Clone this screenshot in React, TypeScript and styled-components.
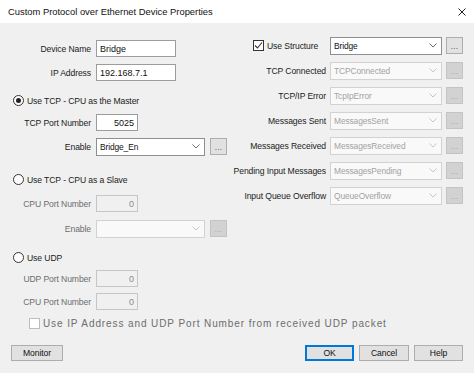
import React from 'react';
import styled, { createGlobalStyle } from 'styled-components';

const GlobalStyle = createGlobalStyle`
  html, body {
    margin: 0;
    padding: 0;
  }
  body {
    font-family: 'Liberation Sans', Arial, sans-serif;
    font-size: 8.6px;
    letter-spacing: -0.1px;
    color: #1b1b1b;
  }
`;

const Window = styled.div`
  width: 474px;
  height: 373px;
  display: flex;
  flex-direction: column;
  background: #f0f0f0;
  overflow: hidden;
`;

const TitleBar = styled.div`
  height: 23px;
  flex-shrink: 0;
  background: #ffffff;
  display: flex;
  align-items: center;
  justify-content: space-between;
  padding: 0 8px 0 8px;
`;

const Title = styled.span`
  font-size: 9.4px;
  letter-spacing: 0;
  color: #111;
`;

const Body = styled.div`
  flex: 1;
  display: flex;
  flex-direction: column;
  padding: 0 11px 12px 11px;
`;

const Columns = styled.div`
  flex: 1;
  display: grid;
  grid-template-columns: 217px 231px;
  column-gap: 4px;
`;

const LeftCol = styled.div`
  display: flex;
  flex-direction: column;
  padding-top: 17px;
`;

const RightCol = styled.div`
  display: flex;
  flex-direction: column;
  gap: 8px;
  padding-top: 14px;
`;

const Row = styled.div<{ $top?: number; $gap?: number }>`
  display: flex;
  align-items: center;
  height: 17px;
  margin-top: ${(p) => p.$top ?? 0}px;
  gap: ${(p) => p.$gap ?? 5}px;
`;

const Label = styled.span<{ $w: number; $disabled?: boolean }>`
  width: ${(p) => p.$w}px;
  flex-shrink: 0;
  text-align: right;
  white-space: nowrap;
  color: ${(p) => (p.$disabled ? '#6d6d6d' : '#1b1b1b')};
`;

const TextBox = styled.div<{ $w: number; $disabled?: boolean; $right?: boolean }>`
  width: ${(p) => p.$w}px;
  height: 17px;
  box-sizing: border-box;
  border: 1px solid ${(p) => (p.$disabled ? '#c6c6c6' : '#9c9c9c')};
  background: ${(p) => (p.$disabled ? '#f0f0f0' : '#ffffff')};
  color: ${(p) => (p.$disabled ? '#8a8a8a' : '#111')};
  display: flex;
  align-items: center;
  justify-content: ${(p) => (p.$right ? 'flex-end' : 'flex-start')};
  padding: 0 3px;
  white-space: nowrap;
  font-size: 9px;
  letter-spacing: 0;
`;

const Combo = styled.div<{ $w: number; $disabled?: boolean }>`
  width: ${(p) => p.$w}px;
  height: 18px;
  box-sizing: border-box;
  border: 1px solid ${(p) => (p.$disabled ? '#d2d2d2' : '#8f8f8f')};
  background: ${(p) => (p.$disabled ? '#f9f9f9' : '#ffffff')};
  color: ${(p) => (p.$disabled ? '#a2a2a2' : '#111')};
  display: flex;
  align-items: center;
  justify-content: space-between;
  padding: 0 4px 0 3px;
  white-space: nowrap;
  font-size: 8.4px;

  svg {
    flex-shrink: 0;
  }
`;

const DotsButton = styled.div<{ $disabled?: boolean }>`
  width: 17px;
  height: 17px;
  box-sizing: border-box;
  border: 1px solid ${(p) => (p.$disabled ? '#c4c4c4' : '#adadad')};
  background: ${(p) => (p.$disabled ? '#d2d2d2' : '#e1e1e1')};
  color: ${(p) => (p.$disabled ? '#9a9a9a' : '#333')};
  display: flex;
  align-items: center;
  justify-content: center;
  font-size: 8px;
  letter-spacing: 0.3px;
  line-height: 1;
  padding-top: 2px;
`;

const RadioRow = styled.label<{ $top: number }>`
  display: flex;
  align-items: center;
  gap: 3px;
  height: 17px;
  margin-top: ${(p) => p.$top}px;
  padding-left: 2px;
  white-space: nowrap;
`;

const RadioDot = styled.span<{ $checked?: boolean }>`
  width: 11px;
  height: 11px;
  flex-shrink: 0;
  box-sizing: border-box;
  border: 1px solid #333;
  border-radius: 50%;
  background: #fff;
  display: flex;
  align-items: center;
  justify-content: center;

  &::after {
    content: '';
    width: 5px;
    height: 5px;
    border-radius: 50%;
    background: ${(p) => (p.$checked ? '#222' : 'transparent')};
  }
`;

const CheckRow = styled.label<{ $top?: number; $indent: number; $disabled?: boolean }>`
  display: flex;
  align-items: center;
  gap: 2px;
  height: 17px;
  margin-top: ${(p) => p.$top ?? 0}px;
  padding-left: ${(p) => p.$indent}px;
  color: ${(p) => (p.$disabled ? '#6d6d6d' : '#1b1b1b')};
  white-space: nowrap;
`;

const CheckBox = styled.span<{ $disabled?: boolean }>`
  width: 11px;
  height: 11px;
  flex-shrink: 0;
  box-sizing: border-box;
  border: 1px solid ${(p) => (p.$disabled ? '#bcbcbc' : '#333')};
  background: #fff;
  display: flex;
  align-items: center;
  justify-content: center;
  margin-right: 1px;
`;

const WideText = styled.span`
  font-size: 10px;
  letter-spacing: 0.9px;
`;

const StructLabel = styled.div`
  width: 94px;
  flex-shrink: 0;
  display: flex;
  align-items: center;
  gap: 2px;
  padding-left: 21px;
  box-sizing: border-box;
  white-space: nowrap;
`;

const Footer = styled.div`
  display: flex;
  align-items: center;
  gap: 5px;
`;

const Spacer = styled.div`
  flex: 1;
`;

const DialogButton = styled.div<{ $w: number; $default?: boolean }>`
  width: ${(p) => p.$w}px;
  height: 16px;
  box-sizing: border-box;
  border: 1px solid ${(p) => (p.$default ? '#0078d7' : '#adadad')};
  box-shadow: ${(p) => (p.$default ? 'inset 0 0 0 1px #0078d7' : 'none')};
  background: #e1e1e1;
  color: #111;
  display: flex;
  align-items: center;
  justify-content: center;
`;

const Chevron: React.FC<{ disabled?: boolean }> = ({ disabled }) => (
  <svg width="8" height="5" viewBox="0 0 8 5">
    <path d="M0.5 0.5 L4 4 L7.5 0.5" fill="none" stroke={disabled ? '#c6c6c6' : '#6e6e6e'} strokeWidth="1" />
  </svg>
);

const CheckMark = () => (
  <svg width="9" height="9" viewBox="0 0 9 9">
    <path d="M1 4.5 L3.5 7 L8 1.5" fill="none" stroke="#333" strokeWidth="1.1" />
  </svg>
);

const CloseIcon = () => (
  <svg width="8" height="8" viewBox="0 0 8 8">
    <path d="M0.5 0.5 L7.5 7.5 M7.5 0.5 L0.5 7.5" stroke="#222" strokeWidth="1" />
  </svg>
);

const linkedTags = [
  { label: 'TCP Connected', value: 'TCPConnected' },
  { label: 'TCP/IP Error', value: 'TcpIpError' },
  { label: 'Messages Sent', value: 'MessagesSent' },
  { label: 'Messages Received', value: 'MessagesReceived' },
  { label: 'Pending Input Messages', value: 'MessagesPending' },
  { label: 'Input Queue Overflow', value: 'QueueOverflow' },
];

const App: React.FC = () => {
  return (
    <>
      <GlobalStyle />
      <Window>
        <TitleBar>
          <Title>Custom Protocol over Ethernet Device Properties</Title>
          <CloseIcon />
        </TitleBar>

        <Body>
          <Columns>
            <LeftCol>
              <Row>
                <Label $w={80}>Device Name</Label>
                <TextBox $w={80}>Bridge</TextBox>
              </Row>
              <Row $top={7}>
                <Label $w={80}>IP Address</Label>
                <TextBox $w={80}>192.168.7.1</TextBox>
              </Row>

              <RadioRow $top={11}>
                <RadioDot $checked />
                Use TCP - CPU as the Master
              </RadioRow>
              <Row $top={5}>
                <Label $w={80}>TCP Port Number</Label>
                <TextBox $w={42} $right>5025</TextBox>
              </Row>
              <Row $top={7}>
                <Label $w={80}>Enable</Label>
                <Combo $w={109}>
                  Bridge_En
                  <Chevron />
                </Combo>
                <DotsButton>...</DotsButton>
              </Row>

              <RadioRow $top={16}>
                <RadioDot />
                Use TCP - CPU as a Slave
              </RadioRow>
              <Row $top={7}>
                <Label $w={80} $disabled>CPU Port Number</Label>
                <TextBox $w={42} $disabled $right>0</TextBox>
              </Row>
              <Row $top={8}>
                <Label $w={80} $disabled>Enable</Label>
                <Combo $w={109} $disabled>
                  <span />
                  <Chevron disabled />
                </Combo>
                <DotsButton $disabled>...</DotsButton>
              </Row>

              <RadioRow $top={12}>
                <RadioDot />
                Use UDP
              </RadioRow>
              <Row $top={4}>
                <Label $w={80} $disabled>UDP Port Number</Label>
                <TextBox $w={42} $disabled $right>0</TextBox>
              </Row>
              <Row $top={6}>
                <Label $w={80} $disabled>CPU Port Number</Label>
                <TextBox $w={42} $disabled $right>0</TextBox>
              </Row>
              <CheckRow $top={5} $indent={18} $disabled>
                <CheckBox $disabled />
                <WideText>Use IP Address and UDP Port Number from received UDP packet</WideText>
              </CheckRow>
            </LeftCol>

            <RightCol>
              <Row $gap={4}>
                <StructLabel>
                  <CheckBox>
                    <CheckMark />
                  </CheckBox>
                  Use Structure
                </StructLabel>
                <Combo $w={112}>
                  Bridge
                  <Chevron />
                </Combo>
                <DotsButton>...</DotsButton>
              </Row>
              {linkedTags.map((tag) => (
                <Row key={tag.label} $gap={4}>
                  <Label $w={94}>{tag.label}</Label>
                  <Combo $w={112} $disabled>
                    {tag.value}
                    <Chevron disabled />
                  </Combo>
                  <DotsButton $disabled>...</DotsButton>
                </Row>
              ))}
            </RightCol>
          </Columns>

          <Footer>
            <DialogButton $w={52}>Monitor</DialogButton>
            <Spacer />
            <DialogButton $w={49} $default>OK</DialogButton>
            <DialogButton $w={50}>Cancel</DialogButton>
            <DialogButton $w={49}>Help</DialogButton>
          </Footer>
        </Body>
      </Window>
    </>
  );
};

export default App;
